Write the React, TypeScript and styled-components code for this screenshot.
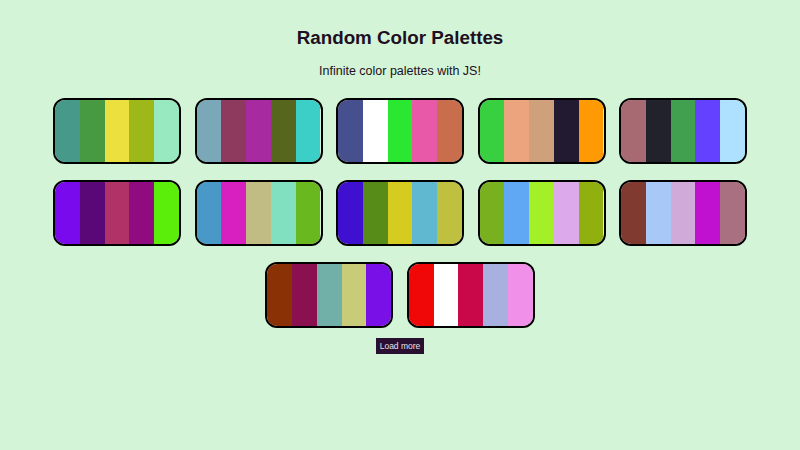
import React from "react";
import styled, { createGlobalStyle } from "styled-components";

const palettes: string[][] = [
  ["#479a8a", "#479a42", "#ebe03d", "#9eb81a", "#98e8c0"],
  ["#7aa8b8", "#8e3a5e", "#a82aa0", "#56661c", "#3ccfc8"],
  ["#47508f", "#ffffff", "#2ae832", "#e85aa8", "#c86e4c"],
  ["#38d040", "#eca47e", "#cfa07c", "#221a30", "#ff9a05"],
  ["#a86a72", "#22222c", "#40a050", "#6440ff", "#aee0ff"],
  ["#7a0aee", "#5a0878", "#b03266", "#900a80", "#5aee0a"],
  ["#4898c8", "#d820c0", "#c0bc84", "#80e0c0", "#6ab820"],
  ["#4010d0", "#588c18", "#d6cc20", "#60b8d0", "#c0c040"],
  ["#78b020", "#60a8f4", "#a4f028", "#dcaaea", "#90b010"],
  ["#803a30", "#a8c8f8", "#d0aad8", "#c010d0", "#a87080"],
  ["#8a3205", "#8a1050", "#70b0a8", "#c8cc78", "#7a10e8"],
  ["#f00808", "#ffffff", "#c80848", "#a8b0e0", "#f090e8"],
];

const App = () => {
  return (
    <>
      <GlobalStyle />
      <Page>
        <Title>Random Color Palettes</Title>
        <Subtitle>Infinite color palettes with JS!</Subtitle>
        <Grid>
          {palettes.map((colors, i) => (
            <Palette key={i}>
              {colors.map((c, j) => (
                <Swatch key={j} $color={c} />
              ))}
            </Palette>
          ))}
        </Grid>
        <LoadMore>Load more</LoadMore>
      </Page>
    </>
  );
};

export default App;

const GlobalStyle = createGlobalStyle`
  body {
    margin: 0;
    background-color: #d3f4d6;
    font-family: "Liberation Sans", Arial, sans-serif;
    color: #1e0f22;
  }
`;

const Page = styled.div`
  display: flex;
  flex-direction: column;
  align-items: center;
  padding-top: 27px;
`;

const Title = styled.h1`
  margin: 0;
  font-size: 18.8px;
  line-height: 22px;
  font-weight: bold;
`;

const Subtitle = styled.p`
  margin: 14px 0 0;
  font-size: 12.5px;
  line-height: 17px;
`;

const Grid = styled.div`
  display: flex;
  flex-wrap: wrap;
  justify-content: center;
  gap: 16px 13.5px;
  width: 694px;
  margin-top: 18px;
`;

const Palette = styled.div`
  display: flex;
  width: 128px;
  height: 66px;
  box-sizing: border-box;
  border: 2px solid #000;
  border-radius: 12px;
  overflow: hidden;
`;

const Swatch = styled.div<{ $color: string }>`
  flex: 1;
  background-color: ${(p) => p.$color};
`;

const LoadMore = styled.button`
  margin-top: 10px;
  border: none;
  padding: 0 4px;
  height: 16px;
  background-color: #2a1030;
  color: #e8e0ea;
  font-family: "Liberation Sans", Arial, sans-serif;
  font-size: 8.5px;
  cursor: pointer;
`;
